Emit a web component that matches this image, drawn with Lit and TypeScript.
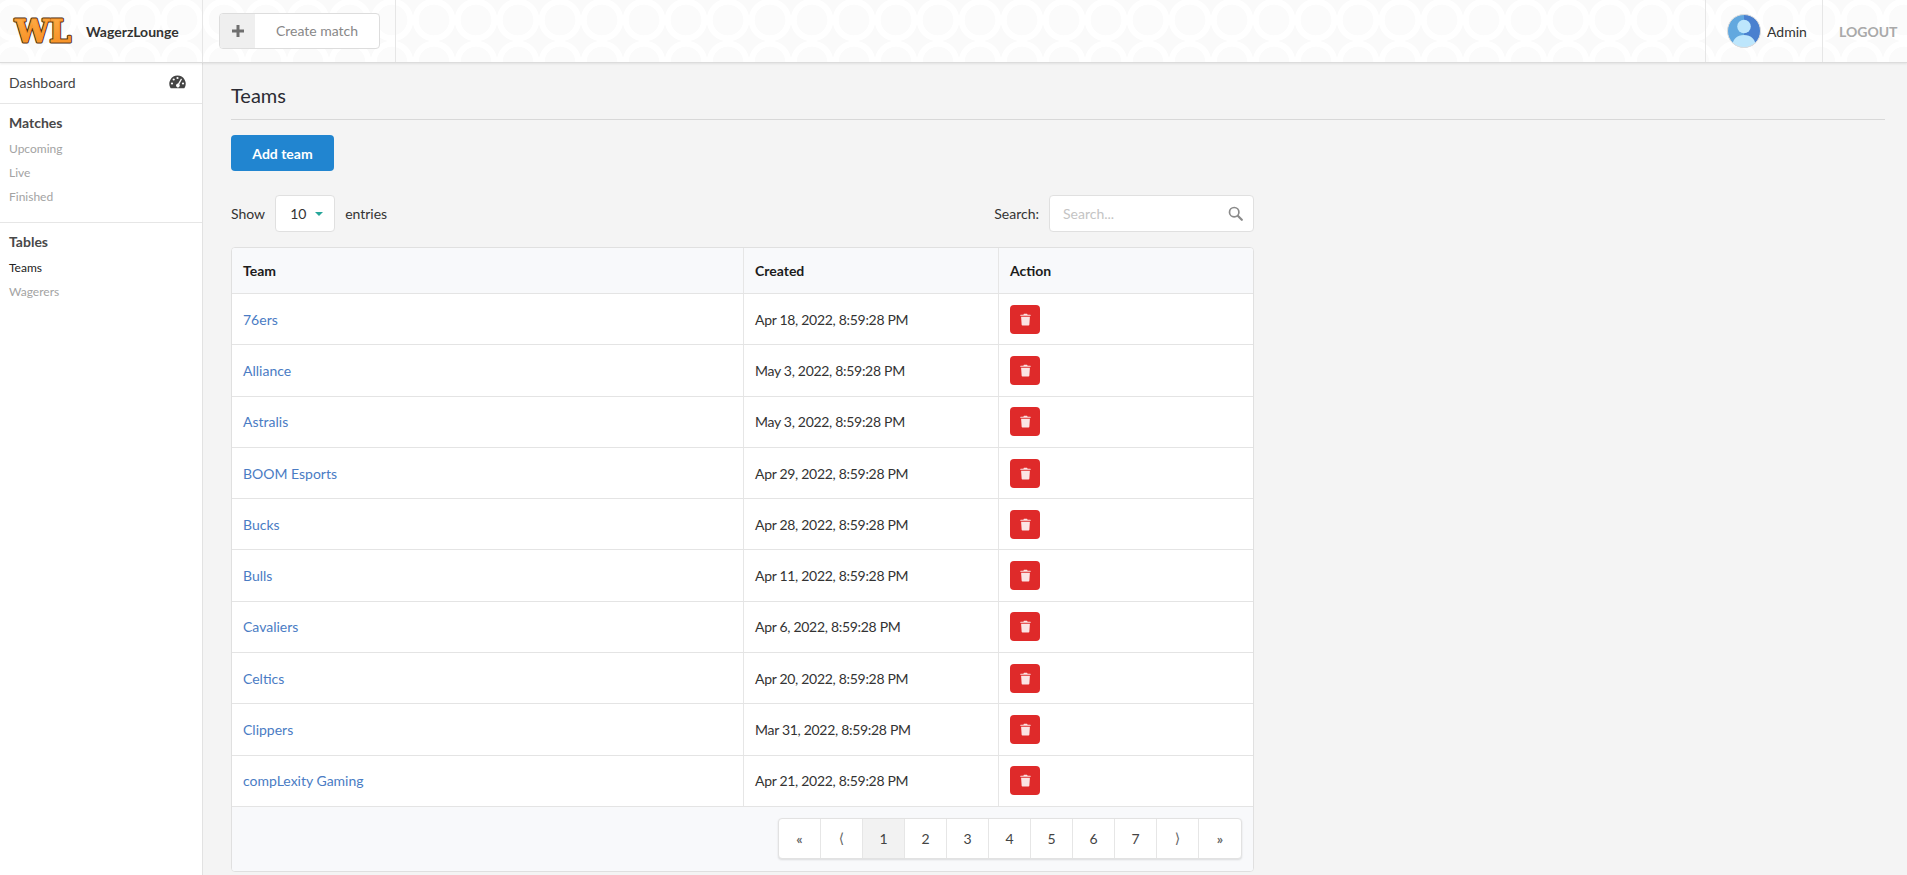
import { LitElement, html, css, svg } from "lit";
import { customElement } from "lit/decorators.js";

const TEAMS: [string, string][] = [
  ["76ers", "Apr 18, 2022, 8:59:28 PM"],
  ["Alliance", "May 3, 2022, 8:59:28 PM"],
  ["Astralis", "May 3, 2022, 8:59:28 PM"],
  ["BOOM Esports", "Apr 29, 2022, 8:59:28 PM"],
  ["Bucks", "Apr 28, 2022, 8:59:28 PM"],
  ["Bulls", "Apr 11, 2022, 8:59:28 PM"],
  ["Cavaliers", "Apr 6, 2022, 8:59:28 PM"],
  ["Celtics", "Apr 20, 2022, 8:59:28 PM"],
  ["Clippers", "Mar 31, 2022, 8:59:28 PM"],
  ["compLexity Gaming", "Apr 21, 2022, 8:59:28 PM"],
];
const PAGES = ["«", "⟨", "1", "2", "3", "4", "5", "6", "7", "⟩", "»"];

const trash = svg`<svg class="trash" viewBox="0 0 12 14" width="11" height="13"><path fill="#fbe4e4" d="M4.3 .6h3.4l.6 1.2H11.2c.3 0 .5.2.5.5v.7H.3v-.7c0-.3.2-.5.5-.5H3.700zM1.200 4h9.600l-.6 8.700c0 .5-.4.8-.9.8H2.700c-.5 0-.9-.3-.9-.8z"/></svg>`;

@customElement("app-root")
export class AppRoot extends LitElement {
  static styles = css`
    :host {
      display: flex;
      flex-direction: column;
      min-height: 100vh;
      background: #f4f4f4;
      font-family: Lato, "Liberation Sans", sans-serif;
      font-size: 14px;
      color: #333;
    }
    * { box-sizing: border-box; }
    .top {
      height: 63px;
      flex: none;
      display: flex;
      align-items: stretch;
      border-bottom: 1px solid #dcdcdc;
      box-shadow: 0 1px 2px rgba(0, 0, 0, .08);
      background-color: #fafafa;
      background-image: radial-gradient(circle at 21px 21px, #fbfbfb 15px, #fff 15.6px, #fff 21px, transparent 21.6px);
      background-size: 42px 42px;
      background-position: -7px -1px;
      position: relative;
      z-index: 1;
    }
    .brand {
      width: 203px;
      display: flex;
      align-items: center;
      padding-left: 12px;
      border-right: 1px solid #e6e6e6;
      font-weight: 700;
      font-size: 14px;
      color: #333;
      flex: none;
    }
    .brand svg { margin-right: 12px; overflow: visible; }
    .create-cell {
      width: 193px;
      padding-left: 16px;
      display: flex;
      align-items: center;
      border-right: 1px solid #e6e6e6;
      flex: none;
    }
    .create {
      width: 161px;
      height: 36px;
      display: flex;
      border: 1px solid #ddd;
      border-radius: 4px;
      overflow: hidden;
      background: #fff;
      color: #888;
    }
    .create .plus {
      width: 35px;
      background: #efefef;
      display: flex;
      align-items: center;
      justify-content: center;
    }
    .create .label { flex: 1; text-align: center; line-height: 34px; }
    .spacer { flex: 1; }
    .user {
      width: 118px;
      flex: none;
      display: flex;
      align-items: center;
      padding-left: 21px;
      gap: 6px;
      border-left: 1px solid #e6e6e6;
      border-right: 1px solid #e6e6e6;
      color: #333;
    }
    .logout {
      width: 84px;
      flex: none;
      display: flex;
      align-items: center;
      padding-left: 16px;
      font-weight: 700;
      color: #a9a9a9;
      white-space: nowrap;
    }
    .body { flex: 1; display: flex; }
    .side {
      width: 203px;
      flex: none;
      background: #fff;
      border-right: 1px solid #e2e2e2;
    }
    .dash {
      height: 41px;
      display: flex;
      align-items: center;
      justify-content: space-between;
      padding: 0 16px 2px 9px;
      border-bottom: 1px solid #e6e6e6;
      color: #444;
    }
    .sec { padding: 8px 9px 13px; border-bottom: 1px solid #e6e6e6; }
    .sec:last-child { border-bottom: 0; }
    .sec h4 { margin: 0 0 3px; font-size: 14px; font-weight: 700; line-height: 22px; color: #484848; }
    .sec a { display: block; font-size: 12px; line-height: 24px; color: #a3a3a3; }
    .sec a.on { color: #222; }
    .main { flex: 1; padding: 0 22px 0 28px; min-width: 0; }
    .title {
      height: 57px;
      margin: 0;
      border-bottom: 1px solid #d8d8d8;
      font-size: 20px;
      font-weight: 400;
      line-height: 64px;
      color: #2b2b33;
    }
    .add {
      display: block;
      margin: 15px 0 24px;
      width: 103px;
      height: 36px;
      border: 0;
      border-radius: 4px;
      background: #2185d0;
      color: #fff;
      font: 700 14px Lato, "Liberation Sans", sans-serif;
    }
    .wrap { width: 1023px; }
    .controls {
      height: 37px;
      margin-bottom: 15px;
      display: flex;
      align-items: center;
      justify-content: space-between;
    }
    .group { display: flex; align-items: center; }
    .select {
      width: 60px;
      height: 37px;
      margin: 0 10px;
      background: #fff;
      border: 1px solid #e0e0e0;
      border-radius: 4px;
      display: flex;
      align-items: center;
      padding-left: 14px;
      gap: 9px;
    }
    .caret {
      width: 0;
      height: 0;
      border-left: 4px solid transparent;
      border-right: 4px solid transparent;
      border-top: 4px solid #26a69a;
    }
    .search {
      width: 205px;
      height: 37px;
      margin-left: 10px;
      background: #fff;
      border: 1px solid #e0e0e0;
      border-radius: 4px;
      display: flex;
      align-items: center;
      justify-content: space-between;
      padding: 0 10px 0 13px;
      color: #c4c4c4;
    }
    .table {
      background: #fff;
      border: 1px solid #e0e0e0;
      border-radius: 4px;
      overflow: hidden;
    }
    .row {
      display: grid;
      grid-template-columns: 512px 255px 1fr;
      height: 51.3px;
      border-bottom: 1px solid #e4e4e4;
    }
    .row.head {
      height: 46px;
      background: #f8f9fb;
      font-weight: 700;
      color: #1c1c1c;
    }
    .cell {
      display: flex;
      align-items: center;
      padding-left: 11px;
      border-right: 1px solid #e6e6e6;
    }
    .cell:last-child { border-right: 0; }
    .cell a { color: #4a7cc4; }
    .date { letter-spacing: -0.3px; }
    .del {
      width: 30px;
      height: 29px;
      background: #df2a2a;
      border-radius: 4px;
      display: flex;
      align-items: center;
      justify-content: center;
    }
    .foot {
      height: 64px;
      background: #f8f9fb;
      display: flex;
      justify-content: flex-end;
      align-items: flex-start;
      padding: 11px 11px 0 0;
    }
    .pager {
      display: flex;
      height: 41px;
      background: #fff;
      border: 1px solid #e2e2e2;
      border-radius: 4px;
      box-shadow: 0 1px 2px rgba(0, 0, 0, .12);
      overflow: hidden;
    }
    .pager span {
      width: 42px;
      display: flex;
      align-items: center;
      justify-content: center;
      border-right: 1px solid #e6e6e6;
      color: #444;
    }
    .pager span:last-child { border-right: 0; }
    .pager span.on { background: #f2f2f2; }
    .pager span.edge { font-size: 14px; font-weight: 700; color: #666; }
    .pager span.arrow { font-family: "DejaVu Sans", sans-serif; color: #666; }
  `;

  render() {
    return html`
      <header class="top">
        <div class="brand">
          <svg width="62" height="36" viewBox="0 0 62 36">
            <defs>
              <linearGradient id="wl" x1="0" y1="0" x2="0" y2="1">
                <stop offset="0" stop-color="#ffb04a" />
                <stop offset="1" stop-color="#f68b1f" />
              </linearGradient>
            </defs>
            <g font-family="DejaVu Serif, serif" font-weight="700" font-size="31">
              <text x="3" y="29" textLength="56" lengthAdjust="spacingAndGlyphs"
                fill="#4a2f10" stroke="#4a2f10" stroke-width="3" stroke-linejoin="round">WL</text>
              <text x="3" y="29" textLength="56" lengthAdjust="spacingAndGlyphs"
                fill="url(#wl)" stroke="#f9992f" stroke-width="1">WL</text>
            </g>
          </svg>
          <span>WagerzLounge</span>
        </div>
        <div class="create-cell">
          <div class="create">
            <div class="plus">
              <svg width="12" height="12" viewBox="0 0 12 12"><path fill="#6f6f6f" d="M4.500 0h3v4.500H12v3H7.500V12h-3V7.500H0v-3h4.500z" /></svg>
            </div>
            <div class="label">Create match</div>
          </div>
        </div>
        <div class="spacer"></div>
        <div class="user">
          <svg width="34" height="34" viewBox="0 0 34 34">
            <defs><clipPath id="av"><circle cx="17" cy="17" r="16.500" /></clipPath></defs>
            <g clip-path="url(#av)">
              <rect width="17" height="34" fill="#62a8df" />
              <rect x="17" width="17" height="34" fill="#4a80cf" />
              <path fill="#bde6fc" d="M5 34c0-9 5-13 12-13s12 4 12 13z" />
              <circle cx="17" cy="12.500" r="6.800" fill="#bde6fc" />
            </g>
            <circle cx="17" cy="17" r="16.500" fill="none" stroke="#dcdcdc" />
          </svg>
          <span>Admin</span>
        </div>
        <div class="logout">LOGOUT</div>
      </header>
      <div class="body">
        <nav class="side">
          <div class="dash">
            <span>Dashboard</span>
            <svg width="17" height="14" viewBox="0 0 17 14">
              <path fill="#444" d="M8.500 .5a8.200 8.200 0 0 1 7 12.400c-.2.300-.4.400-.8.400H2.300c-.4 0-.6-.1-.8-.4A8.200 8.200 0 0 1 8.500 .5z" />
              <g fill="#fff">
                <circle cx="3" cy="8.500" r="1.100" /><circle cx="4.700" cy="4.500" r="1.100" />
                <circle cx="8.500" cy="3" r="1.100" /><circle cx="14" cy="8.500" r="1.100" />
                <path d="M12 3.600l1 .6-2.700 5a1.900 1.900 0 1 1-1.200-.6z" />
              </g>
            </svg>
          </div>
          <div class="sec">
            <h4>Matches</h4>
            <a>Upcoming</a><a>Live</a><a>Finished</a>
          </div>
          <div class="sec">
            <h4>Tables</h4>
            <a class="on">Teams</a><a>Wagerers</a>
          </div>
        </nav>
        <main class="main">
          <h1 class="title">Teams</h1>
          <button class="add">Add team</button>
          <div class="wrap">
            <div class="controls">
              <div class="group">
                <span>Show</span>
                <div class="select"><span>10</span><i class="caret"></i></div>
                <span>entries</span>
              </div>
              <div class="group">
                <span>Search:</span>
                <div class="search">
                  <span>Search...</span>
                  <svg width="15" height="15" viewBox="0 0 15 15" fill="none" stroke="#8a8a8a">
                    <circle cx="6.200" cy="6.200" r="4.700" stroke-width="1.700" />
                    <path d="M9.800 9.800l4 4" stroke-width="2.200" stroke-linecap="round" />
                  </svg>
                </div>
              </div>
            </div>
            <div class="table">
              <div class="row head">
                <div class="cell">Team</div>
                <div class="cell">Created</div>
                <div class="cell">Action</div>
              </div>
              ${TEAMS.map(
                ([n, d]) => html`<div class="row">
                  <div class="cell"><a>${n}</a></div>
                  <div class="cell date">${d}</div>
                  <div class="cell"><div class="del">${trash}</div></div>
                </div>`
              )}
              <div class="foot">
                <div class="pager">
                  ${PAGES.map(
                    (p, i) => html`<span class=${i === 2 ? "on" : i === 0 || i === 10 ? "edge" : i === 1 || i === 9 ? "arrow" : ""}>${p}</span>`
                  )}
                </div>
              </div>
            </div>
          </div>
        </main>
      </div>
    `;
  }
}
